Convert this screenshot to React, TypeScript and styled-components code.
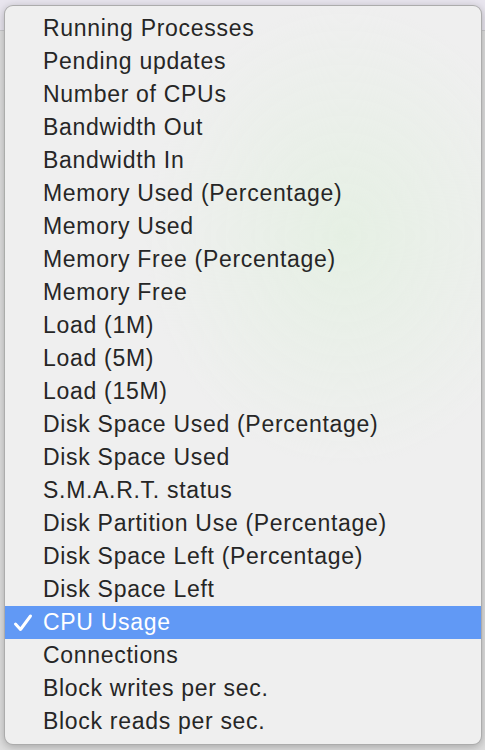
import React from 'react';
import styled, { createGlobalStyle } from 'styled-components';

const GlobalStyle = createGlobalStyle`
  html, body {
    margin: 0;
    padding: 0;
  }
  body {
    width: 485px;
    height: 750px;
    overflow: hidden;
    background:
      linear-gradient(to bottom, #e8e5ee 0, #e8e5ee 30px, #c9c9cc 30px, #c9c9cc 31px, #dedede 31px);
    font-family: 'Liberation Sans', Arial, sans-serif;
  }
`;

const Backdrop = styled.div`
  padding: 5px 3px 6px 4px;
`;

const Menu = styled.ul`
  list-style: none;
  margin: 0;
  padding: 6px 0 6px 0;
  background:
    radial-gradient(ellipse 200px 230px at 340px 230px, rgba(228, 240, 226, 0.85), rgba(239, 239, 239, 0) 100%),
    #efefef;
  border: 1px solid rgba(0, 0, 0, 0.28);
  border-radius: 9px;
  box-shadow: 0 2px 8px rgba(0, 0, 0, 0.25);
  overflow: hidden;
`;

const Item = styled.li<{ $selected?: boolean }>`
  position: relative;
  height: 33px;
  display: flex;
  align-items: center;
  padding-left: 38px;
  font-size: 23px;
  letter-spacing: 0.7px;
  color: ${p => (p.$selected ? '#ffffff' : '#262626')};
  background: ${p => (p.$selected ? '#6199f5' : 'transparent')};
  white-space: nowrap;
`;

const Check = styled.span`
  position: absolute;
  left: 8px;
  top: 50%;
  transform: translateY(-50%);
  display: flex;
`;

const items = [
  'Running Processes',
  'Pending updates',
  'Number of CPUs',
  'Bandwidth Out',
  'Bandwidth In',
  'Memory Used (Percentage)',
  'Memory Used',
  'Memory Free (Percentage)',
  'Memory Free',
  'Load (1M)',
  'Load (5M)',
  'Load (15M)',
  'Disk Space Used (Percentage)',
  'Disk Space Used',
  'S.M.A.R.T. status',
  'Disk Partition Use (Percentage)',
  'Disk Space Left (Percentage)',
  'Disk Space Left',
  'CPU Usage',
  'Connections',
  'Block writes per sec.',
  'Block reads per sec.',
];

const selected = 'CPU Usage';

export default function App() {
  return (
    <>
      <GlobalStyle />
      <Backdrop>
        <Menu>
          {items.map(label => (
            <Item key={label} $selected={label === selected}>
              {label === selected && (
                <Check>
                  <svg width="20" height="19" viewBox="0 0 20 19">
                    <path d="M2.5 10.5 L7.5 16 L17.5 2.5" fill="none" stroke="#fff" strokeWidth="3" strokeLinecap="round" strokeLinejoin="round" />
                  </svg>
                </Check>
              )}
              {label}
            </Item>
          ))}
        </Menu>
      </Backdrop>
    </>
  );
}
